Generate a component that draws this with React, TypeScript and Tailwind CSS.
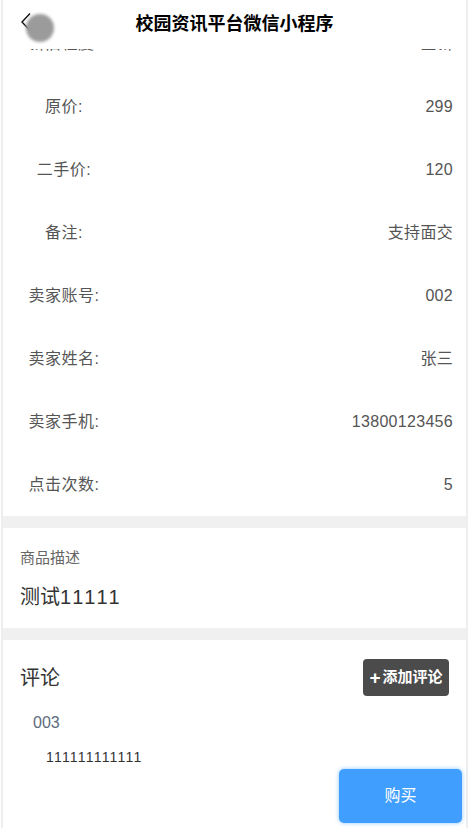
import React from "react";

const rows: { label: string; value: string }[] = [
  { label: "新旧程度:", value: "全新" },
  { label: "原价:", value: "299" },
  { label: "二手价:", value: "120" },
  { label: "备注:", value: "支持面交" },
  { label: "卖家账号:", value: "002" },
  { label: "卖家姓名:", value: "张三" },
  { label: "卖家手机:", value: "13800123456" },
  { label: "点击次数:", value: "5" },
];

export default function App() {
  return (
    <div className="relative h-[828px] w-[470px] overflow-hidden bg-white [font-family:'Liberation_Sans','Noto_Sans_CJK_SC',sans-serif]">
      <div className="ml-[1px] mr-[2px] h-full border-x-2 border-[#eeeeee]">
        {/* header */}
        <div className="absolute left-[3px] right-[4px] top-0 z-10 flex h-[49px] justify-center bg-white pt-[12px]">
          <svg
            className="absolute left-[16px] top-[12px]"
            width="14"
            height="20"
            viewBox="0 0 14 20"
            fill="none"
          >
            <path d="M11 1.5 L3 10 L11 18.5" stroke="#111" strokeWidth="1.4" />
          </svg>
          <div className="absolute left-[23px] top-[14px] h-[28px] w-[28px] rounded-full bg-[#9b9b9b] blur-[1.5px]" />
          <span className="text-[18px] font-bold leading-[24px] text-black">
            校园资讯平台微信小程序
          </span>
        </div>

        {/* info rows */}
        <div className="pt-[12px]">
          {rows.map((r) => (
            <div key={r.label} className="flex h-[63px] items-center pr-[13px] pl-[17px] text-[16px] text-[#555]">
              <span className="w-[88px] text-center tracking-[0.5px]">{r.label}</span>
              <span className="ml-auto tracking-[0.3px]">{r.value}</span>
            </div>
          ))}
        </div>

        <div className="h-[12px] bg-[#f0f0f0]" />

        {/* description */}
        <div className="flex h-[100px] flex-col px-[17px] pt-[19px]">
          <span className="text-[15px] leading-[22px] text-[#666]">商品描述</span>
          <span className="mt-[15px] text-[20px] leading-[26px] text-[#333]">
            测试<span className="tracking-[2.5px]">11111</span>
          </span>
        </div>

        <div className="h-[12px] bg-[#f0f0f0]" />

        {/* comments */}
        <div className="px-[17px] pt-[19px]">
          <div className="flex items-center justify-between">
            <span className="text-[20px] text-[#333]">评论</span>
            <button className="flex h-[37px] w-[86px] items-center justify-center gap-[2px] rounded-[4px] bg-[#4b4b4b] text-[15px] font-bold text-white">
              <span className="text-[19px] leading-none">+</span>
              <span>添加评论</span>
            </button>
          </div>
          <div className="mt-[16px] pl-[13px] text-[16px] leading-[22px] text-[#5d6b7e]">003</div>
          <div className="mt-[13px] pl-[26px] text-[14px] leading-[20px] tracking-[1.2px] text-[#333]">
            111111111111
          </div>
        </div>
      </div>

      <button className="absolute bottom-[5px] right-[8px] flex h-[54px] w-[123px] items-center justify-center rounded-[5px] bg-[#409eff] text-[16px] text-white shadow-[0_0_4px_rgba(64,158,255,0.6)]">
        购买
      </button>
    </div>
  );
}
